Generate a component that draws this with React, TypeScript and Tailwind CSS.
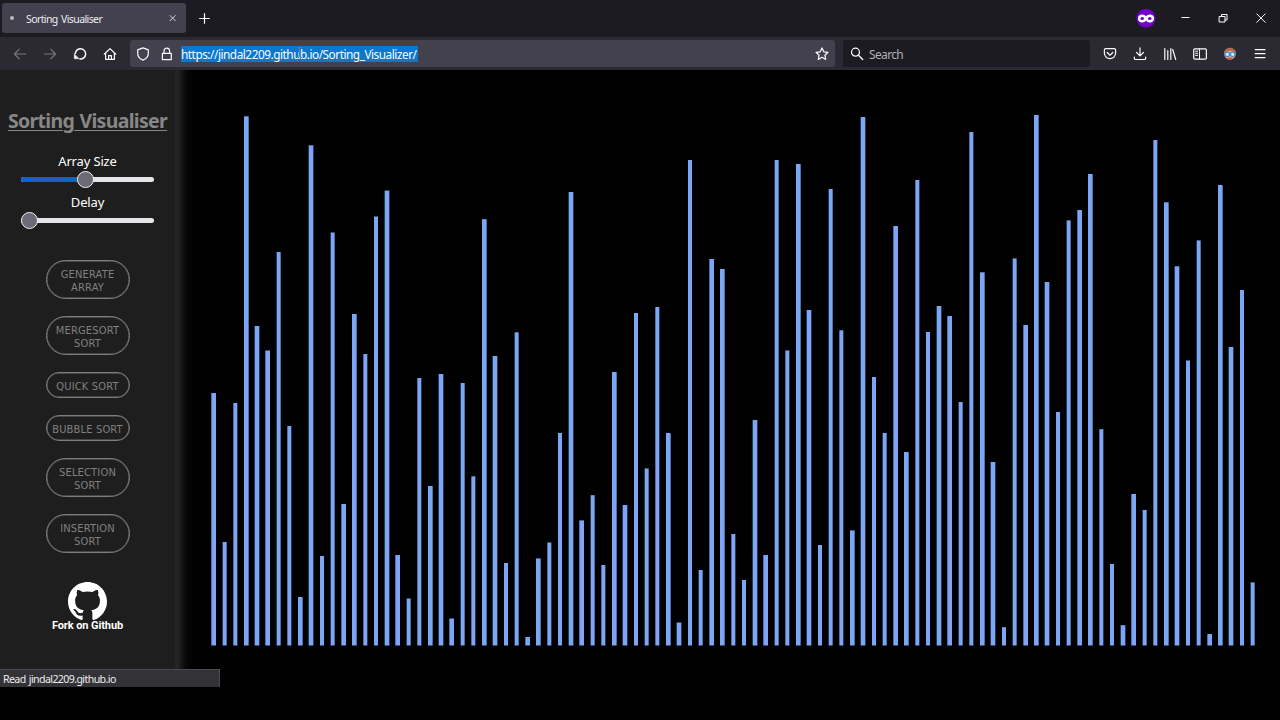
import type { ReactNode } from "react";

// y coordinate of the top of every bar; all of them stand on the same base line
const BAR_TOPS: readonly number[] = [
  393, 542, 403, 116.3, 326, 350.5, 252, 426, 597, 145.3, 556, 232.5, 504, 314, 354, 216.5, 190.6,
  555, 598.5, 378, 486, 374, 618.5, 383, 476.3, 219.2, 356, 563, 332.3, 637, 558.4, 542.5, 433,
  192, 520.4, 495.2, 565, 372, 505, 313, 468.4, 307, 433, 622.5, 160, 570, 259, 269, 534, 580,
  420, 555, 160, 350.5, 164, 310, 545, 189, 330.3, 530.4, 117, 377, 433, 226, 452, 180, 332, 306,
  316, 402, 132, 272.3, 462, 627.2, 258.4, 325, 115, 282, 412, 220.4, 210, 174, 429.2, 564, 625.2,
  494, 510, 140, 202.3, 266.3, 360.5, 240.4, 634, 185, 347, 290, 582.4,
];

const BASE = 645.5;

const ALGORITHMS: readonly string[][] = [
  ["Generate", "Array"],
  ["MergeSort", "Sort"],
  ["Quick Sort"],
  ["Bubble Sort"],
  ["Selection", "Sort"],
  ["Insertion", "Sort"],
];

// bars snap to a 1.5x pixel grid
function snap(v: number) {
  return Math.round(v) / 1.5;
}

function Icon({ children, className = "" }: { children: ReactNode; className?: string }) {
  return (
    <svg
      viewBox="0 0 16 16"
      className={`w-4 h-4 flex-shrink-0 ${className}`}
      fill="none"
      stroke="currentColor"
      strokeWidth="1.2"
      strokeLinecap="round"
      strokeLinejoin="round"
    >
      {children}
    </svg>
  );
}

function TabStrip() {
  return (
    <div className="flex items-start h-[37px] bg-[#1c1b22] text-[#fbfbfe]">
      <div className="flex items-center w-[184px] h-[30px] ml-[2px] mt-[3px] pl-2 pr-[5px] rounded-[3px] bg-[#42414d]">
        <span className="w-[4px] h-[4px] rounded-full bg-[#b9b9c0]" />
        <span className="ml-[12px] mt-[3px] flex-1 text-[10.5px] tracking-[-0.6px] [word-spacing:1.2px] whitespace-nowrap text-[#ececf0]">
          Sorting Visualiser
        </span>
        <Icon className="text-[#d8d8de]">
          <path d="M5 5.500l5.300 5.300M10.300 5.500L5 10.800" strokeWidth="1" />
        </Icon>
      </div>
      <Icon className="ml-[10px] mt-[10px]">
        <path d="M8.500 3.700v9.600M3.700 8.500h9.600" strokeWidth="1.200" />
      </Icon>
      <div className="flex-1" />
      <svg viewBox="0 0 20 20" className="w-5 h-5 mt-[8px]">
        <circle cx="10" cy="10.300" r="9.500" fill="#7100c9" />
        <g fill="none" stroke="#fff" strokeWidth="2.500">
          <ellipse cx="6.200" cy="10.500" rx="3.100" ry="2.800" />
          <ellipse cx="13.800" cy="10.500" rx="3.100" ry="2.800" />
        </g>
        <path d="M9 8.500h2v3.600H9z" fill="#fff" />
      </svg>
      <Icon className="ml-[21px] mt-[10px]">
        <path d="M4.500 7.500h8" strokeWidth="1" strokeLinecap="butt" />
      </Icon>
      <Icon className="ml-[22px] mt-[10px]">
        <path d="M4.500 6.500h5.500v5.500h-5.500zM6.500 6.500v-2h5.500v5.500h-2" strokeWidth="1" strokeLinejoin="miter" />
      </Icon>
      <Icon className="ml-[22px] mr-[11px] mt-[10px]">
        <path d="M3.800 3.900l8.400 8.400M12.200 3.900l-8.400 8.400" strokeWidth="1" />
      </Icon>
    </div>
  );
}

function NavBar() {
  return (
    <div className="flex items-center h-[33px] pl-3 pr-3 bg-[#2b2a33] text-[#fbfbfe]">
      <Icon className="text-[#77767f]">
        <path d="M13.700 8H2.500M7.300 3.200L2.500 8l4.800 4.800" />
      </Icon>
      <Icon className="ml-[14px] text-[#77767f]">
        <path d="M2.300 8h11.200M8.700 3.200L13.500 8l-4.800 4.800" />
      </Icon>
      <Icon className="ml-[14px]">
        <path d="M3.300 7.300A5.200 5.200 0 1 1 8 13.100" strokeWidth="1.500" />
        <path d="M2.200 7.900v4.900h4.900z" fill="currentColor" strokeWidth="0.400" />
      </Icon>
      <Icon className="ml-[14px]">
        <path d="M2.200 8.200L8 2.600l5.800 5.600M3.600 7.200v6.100h8.800V7.200M6.600 13.200V9.700h2.800v3.500" strokeWidth="1.200" />
      </Icon>

      <div className="flex items-center w-[705px] h-[27px] ml-[12px] pl-[5px] pr-[5px] rounded-[3px] bg-[#42414d]">
        <Icon>
          <path d="M8 1.900l5.300 2v3.300c0 3.200-2 5.500-5.300 6.900-3.300-1.400-5.300-3.700-5.300-6.900V3.900z" />
        </Icon>
        <Icon className="ml-[8px]">
          <path d="M5 7.200V4.900a2.800 2.800 0 0 1 5.600 0v2.300M3.400 7.400h8.900v6.200H3.400z" strokeWidth="1.200" />
        </Icon>
        <span className="relative ml-[6px] w-[237px] h-4 bg-[#0b77cf] text-[11.8px] leading-[17px] tracking-[-0.47px] whitespace-nowrap">
          https://jindal2209.github.io/Sorting_Visualizer/
          <svg viewBox="0 0 7 13" className="absolute left-[115px] top-0 w-[7px] h-[13px]" stroke="#6c7c8c" fill="none">
            <path d="M1 1.500h2M4 1.500h2M3.500 2v9M1 11.500h2M4 11.500h2" />
          </svg>
        </span>
        <div className="flex-1" />
        <Icon>
          <path d="M8 1.900l1.800 3.900 4.200.5-3.100 2.900.8 4.200L8 11.300l-3.700 2.100.8-4.200L2 6.300l4.200-.5z" />
        </Icon>
      </div>

      <div className="flex items-center w-[247px] h-[27px] ml-[8px] pl-[6px] rounded-[3px] bg-[#1c1b22]">
        <Icon>
          <circle cx="6.500" cy="6.200" r="4" strokeWidth="1.200" />
          <path d="M9.500 9.300l4.200 4.200" strokeWidth="1.300" />
        </Icon>
        <span className="ml-[4px] mt-[2px] text-[12px] tracking-[-0.65px] text-[#b0b0b6]">Search</span>
      </div>

      <Icon className="ml-[12px]">
        <path d="M3.600 2.700h8.800a1.200 1.200 0 0 1 1.200 1.200v3.200a5.600 5.600 0 0 1-11.200 0V3.900a1.200 1.200 0 0 1 1.200-1.200zM5.200 6.500L8 9.200l2.800-2.700" />
      </Icon>
      <Icon className="ml-[14px]">
        <path d="M8 1.900v7.800M4.600 6.500L8 9.900l3.400-3.400M2.300 11v1.200a1.300 1.300 0 0 0 1.300 1.300h8.800a1.300 1.300 0 0 0 1.300-1.300V11" />
      </Icon>
      <Icon className="ml-[14px]">
        <path d="M2.800 2.500v11M5.800 4.500v9M8.800 2.500v11M10.700 3.500l3 10" />
      </Icon>
      <Icon className="ml-[14px]">
        <rect x="1.700" y="2.800" width="12.700" height="10.300" rx="1.200" />
        <path d="M7.500 3v10M3.600 5.200h2M3.600 7.300h2M3.600 9.400h2" strokeWidth="1" />
      </Icon>
      <svg viewBox="0 0 16 16" className="w-4 h-4 ml-[14px] flex-shrink-0">
        <circle cx="8" cy="8" r="5.800" fill="#e0a18d" />
        <path d="M2.200 8C1.700 4.200 4.500 1.800 8 1.800s6.300 2.400 5.800 6.200C12.600 5.900 10.500 4.700 8 4.700S3.400 5.900 2.200 8z" fill="#b56b49" />
        <path d="M5 11.800h6c-.6 1.500-1.700 2.100-3 2.100s-2.400-.6-3-2.100z" fill="#c9564e" />
        <circle cx="5.300" cy="8.300" r="2.200" fill="#d8efff" stroke="#3e8fd8" strokeWidth="1.200" />
        <circle cx="10.700" cy="8.300" r="2.200" fill="#d8efff" stroke="#3e8fd8" strokeWidth="1.200" />
      </svg>
      <Icon className="ml-[14px]">
        <path d="M3.200 3.700h9.800M3.200 7.700h9.800M3.200 11.600h9.800" />
      </Icon>
    </div>
  );
}

function Slider({ label, value }: { label: string; value: number }) {
  return (
    <div className="flex flex-col items-center h-[41px]">
      <span className="text-[13px] leading-[18px] tracking-[-0.15px] text-white">{label}</span>
      <div className="relative flex items-center w-[133px] h-4 mt-px">
        <div className="w-full h-[5px] rounded-full bg-[#e6e6ea]">
          <div className="h-full rounded-l-full bg-[#1261cf]" style={{ width: value && value + 6 }} />
        </div>
        <span
          className="absolute top-[-0.5px] w-[17px] h-[17px] rounded-full border border-[#f2f2f4] bg-[#6b6a77]"
          style={{ left: value - 0.3 }}
        />
      </div>
    </div>
  );
}

function Sidebar() {
  return (
    <aside className="flex flex-col items-center w-[175px] h-full bg-[#1e1e1e]">
      <h1 className="mt-[36px] h-[46px] text-[19.5px] leading-[29px] tracking-[-0.68px] [word-spacing:1px] font-bold text-[#878787] underline decoration-1 underline-offset-2 whitespace-nowrap">
        Sorting Visualiser
      </h1>
      <Slider label="Array Size" value={56} />
      <Slider label="Delay" value={0} />
      <div className="flex flex-col gap-[17px] mt-[26px]">
        {ALGORITHMS.map((lines) => (
          <button
            key={lines[0]}
            className="w-[84px] pt-[7px] pb-[4px] px-0.5 rounded-[20px] border border-[#7d7d7d] shadow-[inset_0_0_0_0.5px_#6c6c6c] font-['DejaVu_Sans_Condensed','DejaVu_Sans',sans-serif] text-[11px] leading-[13px] tracking-[0.18px] text-[#808080] uppercase"
          >
            {lines.map((line) => (
              <span key={line} className="block whitespace-nowrap">
                {line}
              </span>
            ))}
          </button>
        ))}
      </div>
      <div className="flex flex-col items-center mt-[29px]">
        <svg viewBox="0 0 16 16" className="w-[39px] h-[39px]" fill="#fff">
          <path d="M8 0C3.580 0 0 3.580 0 8c0 3.540 2.290 6.530 5.470 7.590.4.070.55-.17.55-.38 0-.19-.01-.82-.01-1.490-2.010.37-2.530-.49-2.690-.94-.09-.23-.48-.94-.82-1.130-.28-.15-.68-.52-.01-.53.63-.01 1.080.58 1.230.82.72 1.210 1.870.87 2.330.66.07-.52.28-.87.51-1.070-1.780-.2-3.640-.89-3.640-3.950 0-.87.31-1.590.82-2.150-.08-.2-.36-1.020.08-2.120 0 0 .67-.21 2.200.82.64-.18 1.320-.27 2-.27s1.360.09 2 .27c1.530-1.040 2.200-.82 2.200-.82.44 1.100.16 1.920.08 2.120.51.56.82 1.270.82 2.150 0 3.070-1.870 3.750-3.650 3.950.29.25.54.73.54 1.480 0 1.070-.01 1.930-.01 2.200 0 .21.15.46.55.38A8.010 8.010 0 0 0 16 8c0-4.420-3.580-8-8-8z" />
        </svg>
        <span className="-mt-px font-['Roboto',sans-serif] text-[11px] leading-[12px] tracking-[-0.1px] font-bold text-white whitespace-nowrap">
          Fork on Github
        </span>
      </div>
    </aside>
  );
}

function BarChart() {
  return (
    <svg viewBox="200 70 1080 617" className="w-[1080px] h-[617px]" fill="#7ba6f5">
      {BAR_TOPS.map((top, i) => {
        const left = 317.300 + i * 16.236;
        const x = snap(left);
        return <rect key={i} x={x} y={top} width={snap(left + 6.500) - x} height={BASE - top} />;
      })}
    </svg>
  );
}

export default function App() {
  return (
    <div className="w-[1280px] h-[720px] overflow-hidden bg-black font-['Noto_Sans','Open_Sans',sans-serif]">
      <TabStrip />
      <NavBar />
      <main className="relative flex h-[617px] bg-black">
        <Sidebar />
        <div className="w-[25px] h-full bg-linear-to-r from-[#252525] from-10% via-[#0b0b0b] via-40% to-black" />
        <BarChart />
        <div className="absolute left-0 bottom-0 w-[220px] h-[18px] pl-[3px] border-t border-r border-[#4a4a50] bg-[#333236] text-[10.6px] leading-[18px] tracking-[-0.6px] [word-spacing:1px] text-[#ededf0]">
          Read jindal2209.github.io
        </div>
      </main>
    </div>
  );
}
